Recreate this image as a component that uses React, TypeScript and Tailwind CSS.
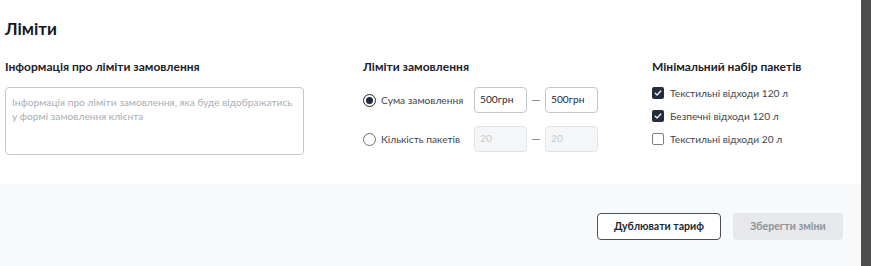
import React from "react";

function Radio({ checked }: { checked: boolean }) {
  return (
    <span
      className={
        "flex h-[13px] w-[13px] shrink-0 items-center justify-center rounded-full border bg-white " +
        (checked ? "border-[#1f2937]" : "border-[#6b7178]")
      }
    >
      {checked && <span className="block h-[7px] w-[7px] rounded-full bg-[#1f2937]" />}
    </span>
  );
}

function Check({ checked }: { checked: boolean }) {
  return checked ? (
    <span className="flex h-[12px] w-[12px] shrink-0 items-center justify-center rounded-[2px] bg-[#232d3b]">
      <svg width="8" height="8" viewBox="0 0 8 8" fill="none">
        <path d="M1.2 4.2 L3.1 6 L6.8 2" stroke="white" strokeWidth="1.2" strokeLinecap="round" strokeLinejoin="round" />
      </svg>
    </span>
  ) : (
    <span className="block h-[12px] w-[12px] shrink-0 rounded-[2px] border border-[#7a8088] bg-white" />
  );
}

function RangeRow({
  checked,
  label,
  a,
  b,
  disabled,
}: {
  checked: boolean;
  label: string;
  a: string;
  b: string;
  disabled?: boolean;
}) {
  const box = disabled
    ? "border-[#e1e4e7] bg-[#f5f6f7] text-[#c6cacf]"
    : "border-[#c3c8cd] bg-white text-[#1f2933]";
  return (
    <div className="flex h-[26px] items-center">
      <div className="flex w-[111px] items-center gap-[5px]">
        <Radio checked={checked} />
        <span className="text-[10.2px] leading-[14px] text-[#3f454b]">{label}</span>
      </div>
      <div className={"flex h-[26px] w-[53px] items-center rounded-[4px] border pl-[5px] text-[10.2px] " + box}>
        {a}
      </div>
      <div className="flex w-[18px] items-center justify-center">
        <span className="block h-px w-[8px] bg-[#8a9096]" />
      </div>
      <div className={"flex h-[26px] w-[53px] items-center rounded-[4px] border pl-[5px] text-[10.2px] " + box}>
        {b}
      </div>
    </div>
  );
}

function CheckRow({ checked, label }: { checked: boolean; label: string }) {
  return (
    <div className="flex h-[14px] items-center gap-[6px]">
      <Check checked={checked} />
      <span className="text-[10.2px] leading-[14px] text-[#3f454b]">{label}</span>
    </div>
  );
}

export default function App() {
  return (
    <div
      className="flex h-[266px] w-full bg-white"
      style={{ fontFamily: "Lato, 'Noto Sans', sans-serif" }}
    >
      <div className="flex flex-1 flex-col">
        <div className="h-[184px] bg-white pl-[5px] pt-[18px]">
          <h1 className="text-[17px] font-bold leading-[22px] text-[#15191e]">Ліміти</h1>
          <div className="mt-[19px] flex">
            <div className="w-[358px]">
              <div className="text-[12px] font-bold leading-[16px] text-[#1c2127]">
                Інформація про ліміти замовлення
              </div>
              <div className="mt-[12px] h-[68px] w-[299px] rounded-[4px] border border-[#c3c8cd] px-[6px] pt-[7px] text-[10.2px] leading-[14px] text-[#a9aeb4]">
                Інформація про ліміти замовлення, яка буде відображатись у формі замовлення клієнта
              </div>
            </div>
            <div className="w-[289px]">
              <div className="text-[12px] font-bold leading-[16px] text-[#1c2127]">Ліміти замовлення</div>
              <div className="mt-[12px] flex flex-col gap-[13px]">
                <RangeRow checked label="Сума замовлення" a="500грн" b="500грн" />
                <RangeRow checked={false} label="Кількість пакетів" a="20" b="20" disabled />
              </div>
            </div>
            <div className="flex-1">
              <div className="text-[12px] font-bold leading-[16px] text-[#1c2127]">
                Мінімальний набір пакетів
              </div>
              <div className="mt-[11px] flex flex-col gap-[9px] pl-0">
                <CheckRow checked label="Текстильні відходи 120 л" />
                <CheckRow checked label="Безпечні відходи 120 л" />
                <CheckRow checked={false} label="Текстильні відходи 20 л" />
              </div>
            </div>
          </div>
        </div>
        <div className="flex flex-1 justify-end gap-[12px] bg-[#f8f9fa] pr-[18px] pt-[29px]">
          <button className="h-[27px] w-[124px] rounded-[4px] border border-[#4b5057] bg-white text-[10.6px] font-bold text-[#1f2933]">
            Дублювати тариф
          </button>
          <button className="h-[27px] w-[110px] rounded-[4px] bg-[#e6e8eb] text-[10.6px] font-bold text-[#8e949a]">
            Зберегти зміни
          </button>
        </div>
      </div>
      <div className="w-[10px] bg-[#4d4d4d]" />
    </div>
  );
}
